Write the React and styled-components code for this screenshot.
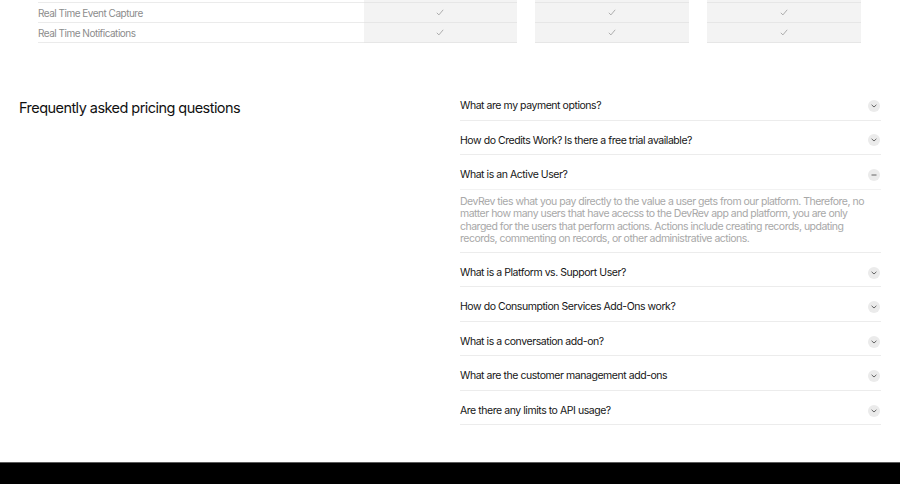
import React, { useState } from 'react';
import styled, { createGlobalStyle } from 'styled-components';

const GlobalStyle = createGlobalStyle`
  html, body {
    margin: 0;
    padding: 0;
    background: #fff;
  }
  body {
    font-family: Inter, "Liberation Sans", Arial, sans-serif;
    -webkit-font-smoothing: antialiased;
  }
`;

const Page = styled.div`
  width: 900px;
  height: 484px;
  overflow: hidden;
  display: flex;
  flex-direction: column;
`;

const Table = styled.div`
  padding: 0 39px 0 38px;
  display: flex;
  flex-direction: column;
`;

const Row = styled.div`
  display: flex;
  height: ${(p) => (p.$clipped ? '3px' : '20px')};
`;

const LabelCell = styled.div`
  width: 326px;
  box-sizing: border-box;
  display: flex;
  align-items: center;
  border-bottom: 1px solid #ebebeb;
  font-size: 10px;
  letter-spacing: -0.5px;
  color: #8c8c8c;
`;

const ValueCell = styled.div`
  width: 154px;
  box-sizing: border-box;
  display: flex;
  align-items: center;
  justify-content: center;
  background: #f3f3f3;
  border-bottom: 1px solid #e6e6e6;
  color: #9a9a9a;

  & + & {
    margin-left: 18px;
  }
`;

const Faq = styled.section`
  display: grid;
  grid-template-columns: 1fr 421px;
  padding: 43px 19px 0 19px;
  flex: 1;
`;

const Heading = styled.h2`
  margin: 0;
  padding-top: 12px;
  font-size: 14.5px;
  line-height: 20px;
  font-weight: 400;
  letter-spacing: -0.55px;
  color: #111;
`;

const List = styled.div`
  display: flex;
  flex-direction: column;
`;

const Item = styled.div`
  border-bottom: 1px solid #ececec;
`;

const Question = styled.button`
  all: unset;
  box-sizing: border-box;
  width: 100%;
  display: flex;
  align-items: center;
  justify-content: space-between;
  padding: 13px 0 7px 0;
  line-height: 13.5px;
  font-size: 10.5px;
  letter-spacing: -0.45px;
  color: #161616;
  cursor: pointer;
  border-bottom: 1px solid ${(p) => (p.$open ? '#f2f2f2' : 'transparent')};
  margin-bottom: ${(p) => (p.$open ? '0' : '-1px')};
`;

const Toggle = styled.span`
  width: 12px;
  height: 12px;
  border-radius: 50%;
  background: #ebebeb;
  display: flex;
  align-items: center;
  justify-content: center;
  margin-right: 1px;
  color: #555;
`;

const Answer = styled.p`
  margin: 0;
  padding: 6px 12px 6px 0;
  font-size: 10.5px;
  line-height: 12.6px;
  letter-spacing: -0.5px;
  color: #a8a8a8;
`;

const Footer = styled.footer`
  height: 21px;
  background: #000;
  border-top: 1px solid #5c5c5c;
`;

const Check = () => (
  <svg width="8" height="7" viewBox="0 0 8 7" fill="none">
    <path d="M0.8 3.8 L2.9 5.9 L7.2 0.8" stroke="currentColor" strokeWidth="0.8" />
  </svg>
);

const Chevron = () => (
  <svg width="6" height="4" viewBox="0 0 6 4" fill="none">
    <path d="M0.6 0.8 L3 3 L5.4 0.8" stroke="currentColor" strokeWidth="0.9" />
  </svg>
);

const Minus = () => (
  <svg width="6" height="2" viewBox="0 0 6 2" fill="none">
    <path d="M0.5 1 H5.5" stroke="currentColor" strokeWidth="0.9" />
  </svg>
);

// first row is the tail end of a row scrolled above the viewport
const rows = [
  { label: '', clipped: true },
  { label: 'Real Time Event Capture' },
  { label: 'Real Time Notifications' },
];

const questions = [
  { q: 'What are my payment options?' },
  { q: 'How do Credits Work? Is there a free trial available?' },
  {
    q: 'What is an Active User?',
    a: 'DevRev ties what you pay directly to the value a user gets from our platform. Therefore, no matter how many users that have acecss to the DevRev app and platform, you are only charged for the users that perform actions. Actions include creating records, updating records, commenting on records, or other administrative actions.',
  },
  { q: 'What is a Platform vs. Support User?' },
  { q: 'How do Consumption Services Add-Ons work?' },
  { q: 'What is a conversation add-on?' },
  { q: 'What are the customer management add-ons' },
  { q: 'Are there any limits to API usage?' },
];

const App = () => {
  const [open, setOpen] = useState(2);

  return (
    <Page>
      <GlobalStyle />
      <Table>
        {rows.map((row, i) => (
          <Row key={i} $clipped={row.clipped}>
            <LabelCell>{row.label}</LabelCell>
            {[0, 1, 2].map((c) => (
              <ValueCell key={c}>{!row.clipped && <Check />}</ValueCell>
            ))}
          </Row>
        ))}
      </Table>
      <Faq>
        <Heading>Frequently asked pricing questions</Heading>
        <List>
          {questions.map((item, i) => {
            const isOpen = open === i;
            return (
              <Item key={item.q}>
                <Question $open={isOpen} onClick={() => setOpen(isOpen ? -1 : i)}>
                  {item.q}
                  <Toggle>{isOpen ? <Minus /> : <Chevron />}</Toggle>
                </Question>
                {isOpen && item.a && <Answer>{item.a}</Answer>}
              </Item>
            );
          })}
        </List>
      </Faq>
      <Footer />
    </Page>
  );
};

export default App;
